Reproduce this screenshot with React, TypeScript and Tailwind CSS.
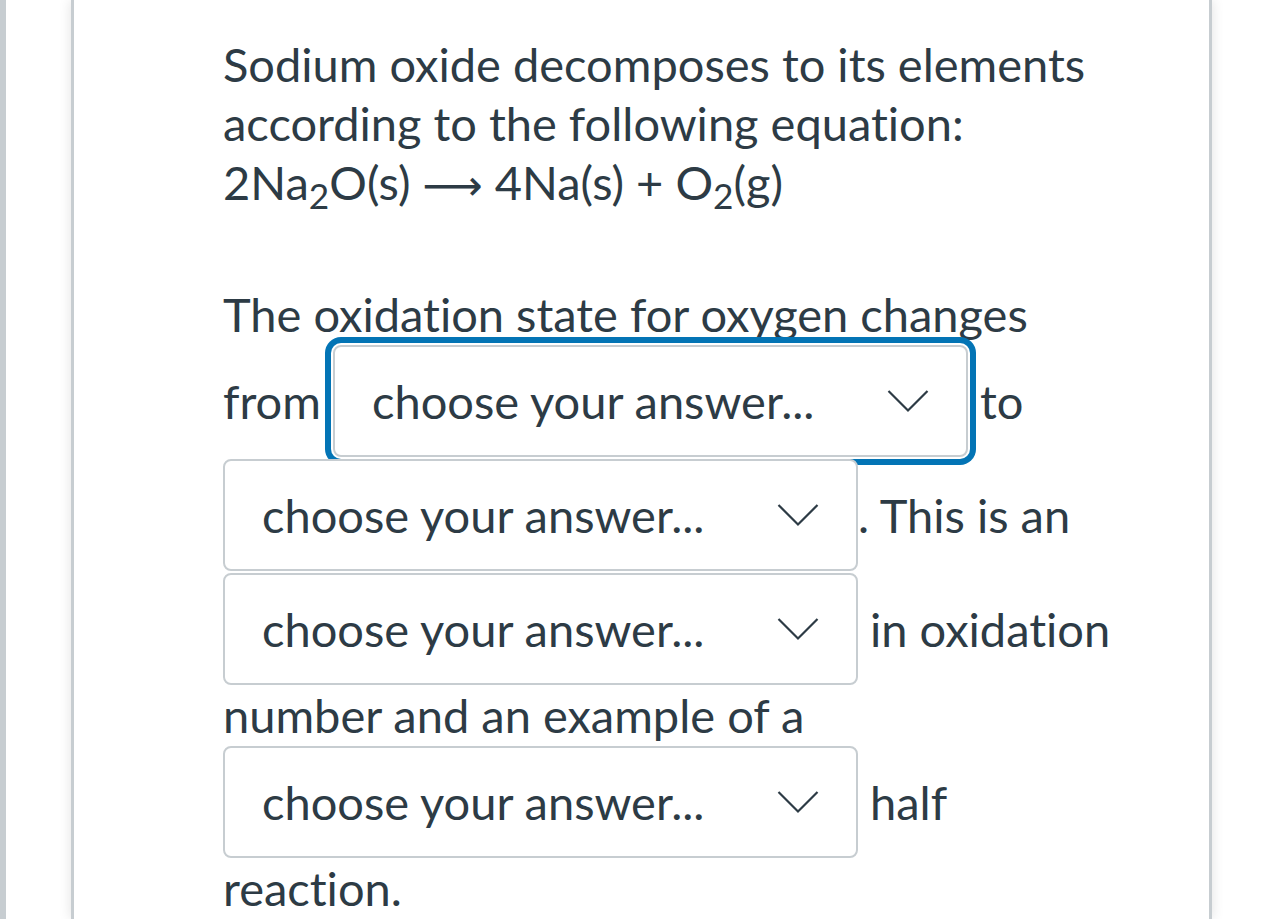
import React from 'react';

const Chevron = () => (
  <svg width="42" height="24" viewBox="0 0 42 24" fill="none" className="shrink-0 self-center">
    <polyline points="1.5,2 21,21.5 40.5,2" stroke="#2d3b45" strokeWidth="2.2" />
  </svg>
);

interface SelectProps {
  focused?: boolean;
}

const AnswerSelect: React.FC<SelectProps> = ({ focused }) => (
  <span
    className={`inline-flex h-[112px] w-[635px] items-center justify-between rounded-[8px] border-2 border-[#c7cdd1] bg-white pl-[37px] pr-[37px] align-baseline my-[1px] ${
      focused ? 'shadow-[0_0_0_2px_#ffffff,0_0_0_8px_#0374b5]' : ''
    }`}
  >
    <span>choose your answer...</span>
    <Chevron />
  </span>
);

export default function App() {
  return (
    <div className="flex h-[919px] overflow-hidden bg-white font-['Lato','Liberation_Sans',sans-serif] text-[#2d3b45] [font-variant-ligatures:none]">
      <div className="w-[6px] shrink-0 bg-[#c7cdd1]" />
      <div className="ml-[65px] w-[1141px] shrink-0 border-x-[3px] border-[#c7cdd1] bg-white pl-[149px] pt-[35px] shadow-[0_0_12px_rgba(0,0,0,0.12)]">
        <div className="w-[900px] text-[47px] leading-[59px]">
          <p>
            Sodium oxide decomposes to its elements
            <br />
            according to the following equation:
          </p>
          <p>
            2Na<sub>2</sub>O(s){' '}
            <span className="font-['DejaVu_Sans',sans-serif] text-[42px] leading-none">⟶</span> 4Na(s) + O<sub>2</sub>(g)
          </p>
          <p className="mt-[73px]">
            The oxidation state for oxygen changes from <AnswerSelect focused /> to <AnswerSelect />. This is an{' '}
            <AnswerSelect /> in oxidation number and an example of a <AnswerSelect /> half reaction.
          </p>
        </div>
      </div>
    </div>
  );
}
